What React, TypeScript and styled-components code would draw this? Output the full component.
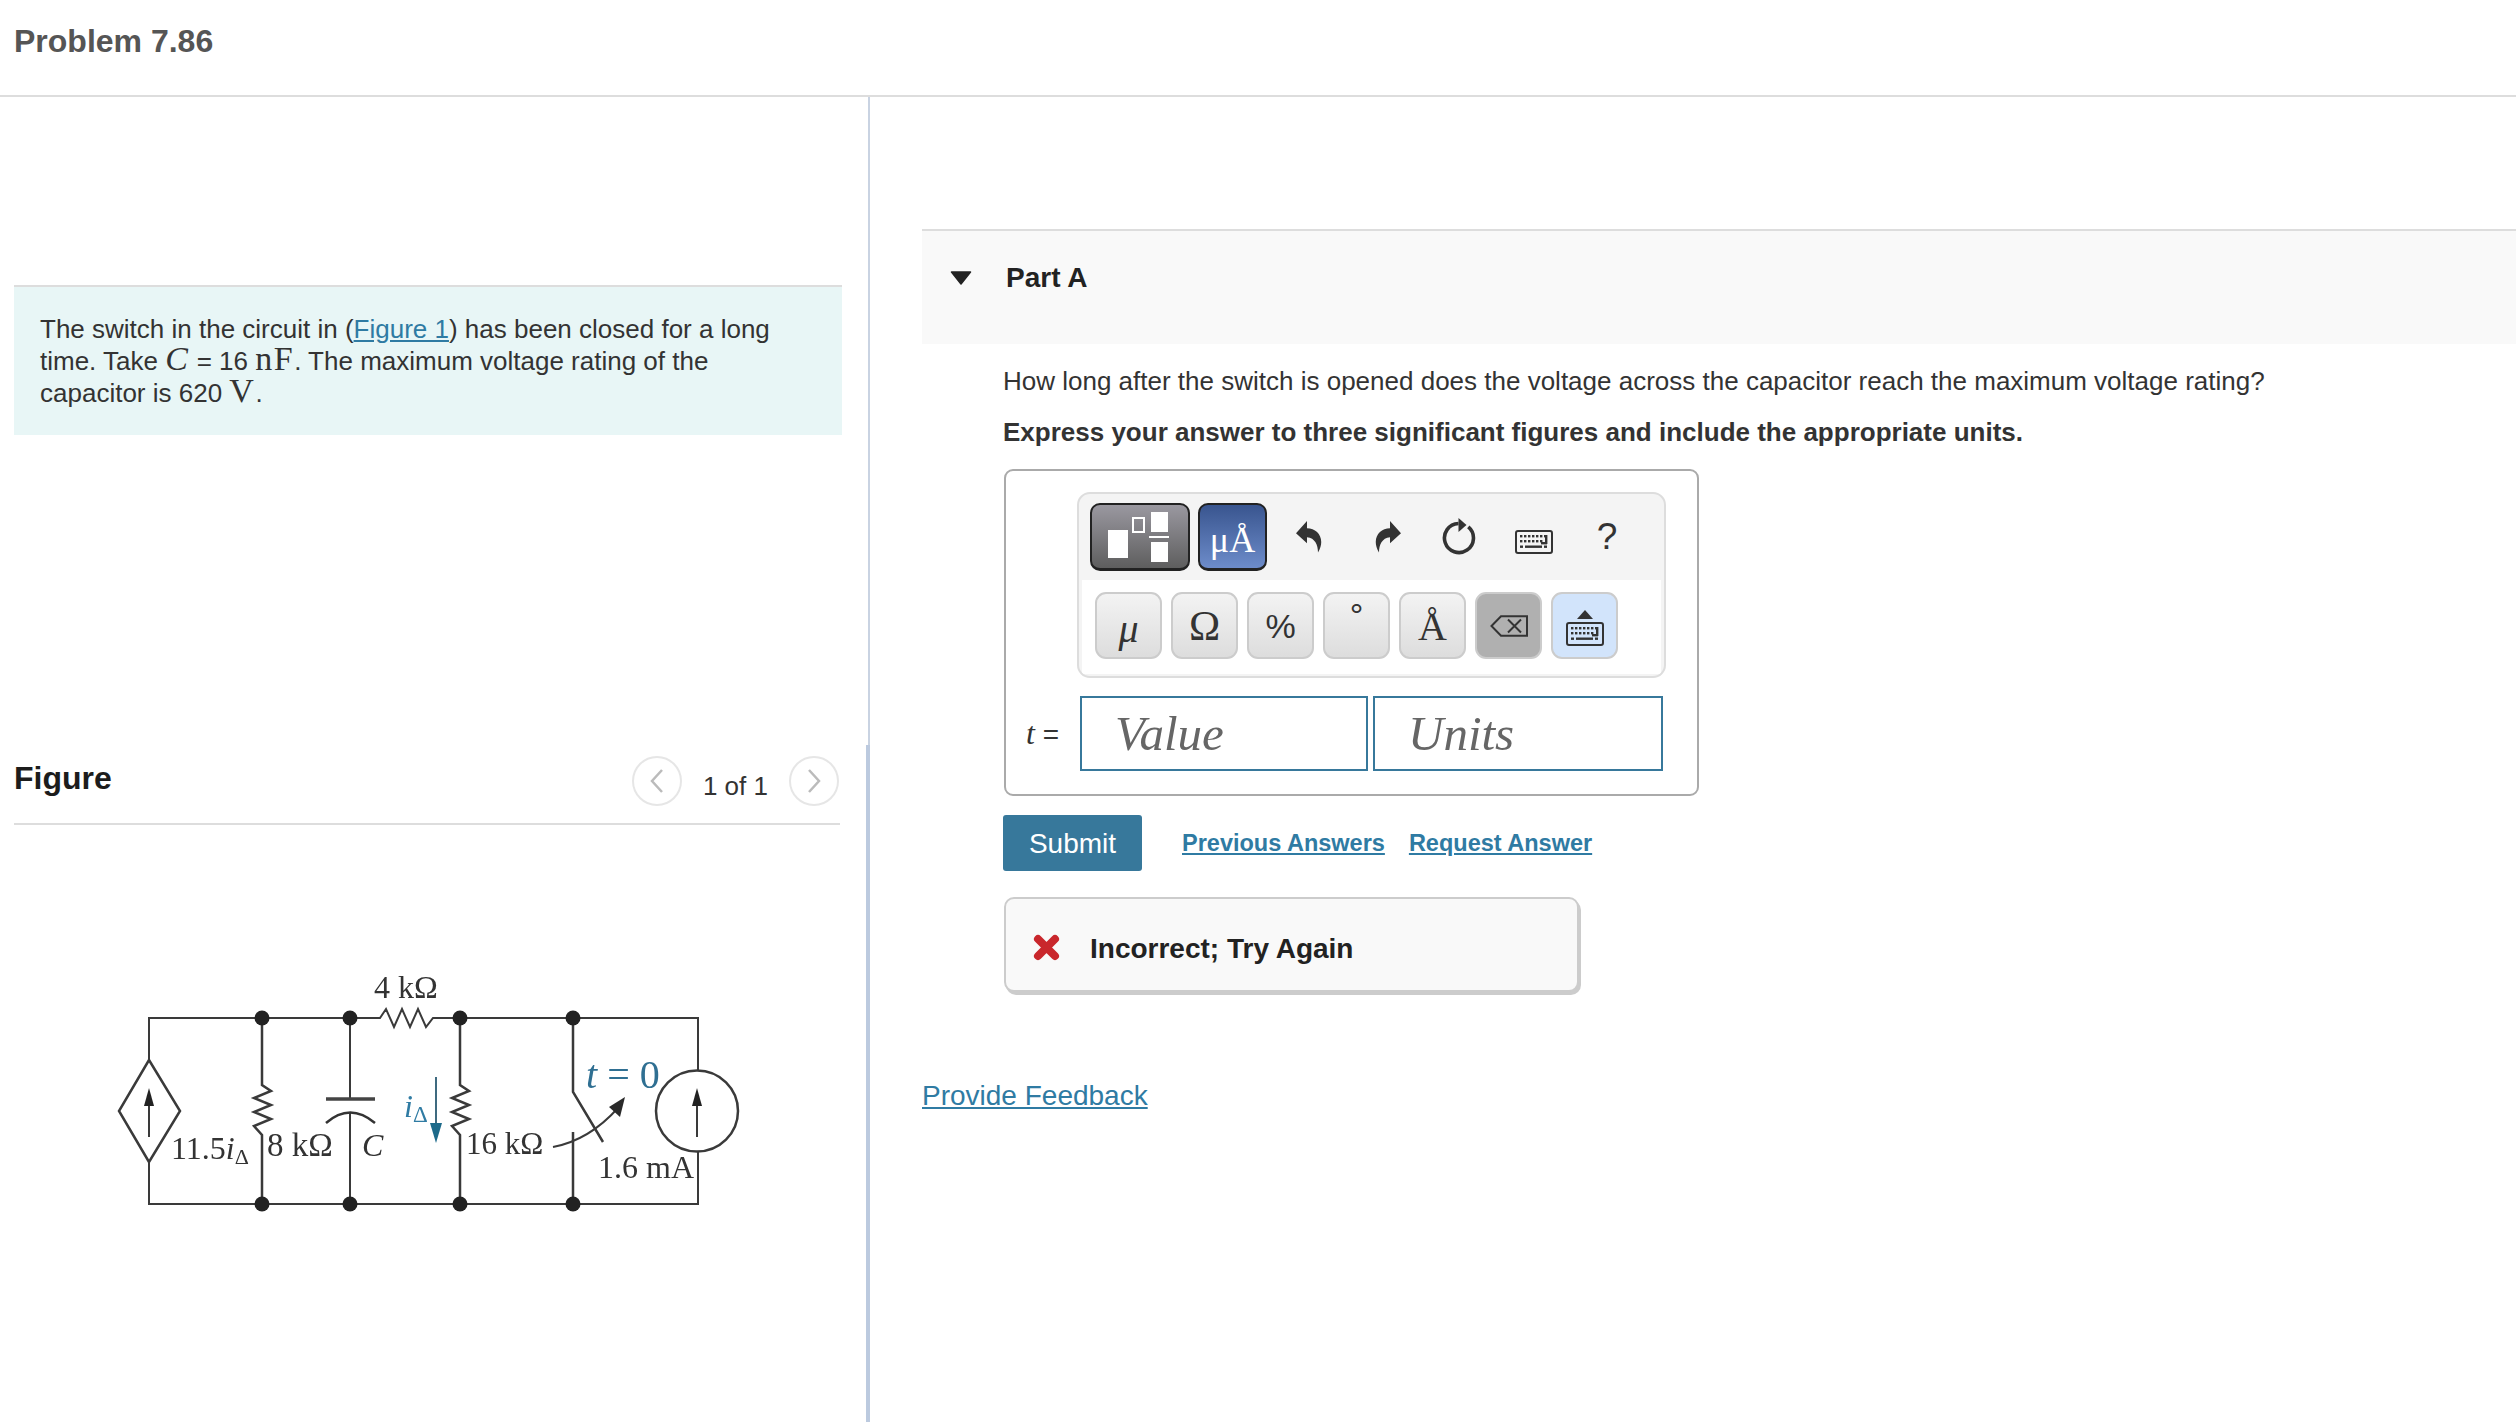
import React from "react";
import styled, { createGlobalStyle } from "styled-components";

const Global = createGlobalStyle`
  html, body { margin: 0; padding: 0; background: #fff; overflow: hidden; }
  body { font-family: "Liberation Sans", Arial, sans-serif; color: #333; }
`;
const Page = styled.div`
  width: 2516px; height: 1422px; display: flex; flex-direction: column; overflow: hidden;
`;
const Header = styled.header`
  height: 95px; flex: none; box-sizing: content-box; border-bottom: 2px solid #ddd;
  display: flex; align-items: center; padding-left: 14px;
`;
const Title = styled.h1`
  margin: 0 0 13px; font-size: 32px; font-weight: 700; color: #555;
`;
const Body = styled.div`
  flex: 1; display: flex; min-height: 0;
`;
const LeftCol = styled.section`
  width: 866px; flex: none; box-sizing: border-box; padding: 188px 24px 0 14px; display: flex; flex-direction: column;
`;
const Divider = styled.div`
  width: 4px; flex: none; display: flex; flex-direction: column; align-items: flex-end;
`;
const DividerThin = styled.div`
  width: 2px; height: 648px; background: #c9d3e2;
`;
const DividerThick = styled.div`
  width: 4px; flex: 1; background: #bccadf;
`;
const RightCol = styled.section`
  flex: 1; padding: 132px 0 0 52px; display: flex; flex-direction: column; min-width: 0;
`;
const Intro = styled.div`
  background: #e8f6f6; border-top: 2px solid #ddd; height: 150px; box-sizing: border-box;
  padding: 26px 50px 0 26px; font-size: 26px; line-height: 32px; color: #333;
`;
const MathText = styled.span<{ $italic?: boolean }>`
  font-family: "Liberation Serif", serif; font-size: 34px; line-height: 20px; letter-spacing: 1.5px;
  font-style: ${(p) => (p.$italic ? "italic" : "normal")};
`;
const TextLink = styled.a`
  color: #2f7ba3; text-decoration: underline;
`;
const FigureBar = styled.div`
  margin-top: 315px; width: 826px; height: 75px; box-sizing: border-box; border-bottom: 2px solid #ddd;
  display: flex; align-items: flex-start; justify-content: space-between;
`;
const FigureTitle = styled.h2`
  margin: 10px 0 0; font-size: 32px; font-weight: 700; color: #1c1c1c; line-height: 37px;
`;
const Pager = styled.div`
  display: flex; align-items: center; gap: 21px; margin: 6px 1px 0 0;
`;
const PagerButton = styled.div`
  width: 50px; height: 50px; box-sizing: border-box; border: 2px solid #e6e6e6; border-radius: 50%;
  display: flex; align-items: center; justify-content: center;
`;
const PagerText = styled.span`
  font-size: 26px; color: #333; position: relative; top: 5px;
`;
const Circuit = styled.svg`
  display: block; margin: 125px 0 0 66px; width: 700px; height: 290px; filter: blur(0.45px);
  font-family: "Liberation Serif", serif;
`;
const PartHeader = styled.div`
  height: 115px; box-sizing: border-box; background: #f9f9f9; border-top: 2px solid #ddd;
  display: flex; align-items: center; padding: 0 0 19px 28px; gap: 34px;
`;
const PartTitle = styled.h3`
  margin: 0; font-size: 28px; font-weight: 700; color: #222;
`;
const PartBody = styled.div`
  padding-left: 81px; display: flex; flex-direction: column; align-items: flex-start;
`;
const Question = styled.p<{ $bold?: boolean }>`
  margin: ${(p) => (p.$bold ? "19px" : "21px")} 0 0; font-size: 26px; line-height: 32px; color: #333;
  font-weight: ${(p) => (p.$bold ? 700 : 400)};
`;
const AnswerBox = styled.div`
  margin: 21px 0 0 1px; width: 695px; height: 327px; box-sizing: border-box; border: 2px solid #aaa; border-radius: 9px;
  padding: 21px 0 0; background: #fff;
`;
const Toolbar = styled.div`
  margin-left: 71px; width: 589px; height: 186px; box-sizing: border-box; border: 2px solid #ddd; border-radius: 13px;
  background: #f4f4f4; padding: 0 3px 2px; display: flex; flex-direction: column; overflow: hidden;
`;
const ToolRow = styled.div`
  height: 86px; box-sizing: border-box; flex: none; padding: 9px 0 0 8px; display: flex; align-items: flex-start;
`;
const TemplateButton = styled.div<{ $blue?: boolean }>`
  width: ${(p) => (p.$blue ? "69px" : "100px")}; height: 68px; box-sizing: border-box; margin-right: ${(p) => (p.$blue ? "5px" : "8px")};
  border: 2px solid #222; border-bottom-width: 3px; border-radius: 10px;
  background: ${(p) => (p.$blue ? "linear-gradient(#39558f,#6d8cca)" : "linear-gradient(#9a98a0,#5e5e5e)")};
  display: flex; align-items: center; justify-content: center; color: #fff;
  font-family: "Liberation Serif", serif; font-size: 36px; padding-top: ${(p) => (p.$blue ? "6px" : "0")};
`;
const IconSlot = styled.div<{ $w: number; $down?: number }>`
  width: ${(p) => p.$w}px; height: 68px; box-sizing: border-box; padding-top: ${(p) => p.$down ?? 0}px;
  display: flex; align-items: center; justify-content: center; color: #333;
`;
const Help = styled.span`
  font-size: 37px; color: #333;
`;
const KeyRow = styled.div`
  flex: 1; background: #fff; padding: 12px 0 0 13px; display: flex; gap: 9px; align-items: flex-start;
`;
const Key = styled.div<{ $tone?: "grey" | "blue" }>`
  width: 67px; height: 67px; box-sizing: border-box; border: 2px solid #ccc; border-radius: 11px;
  background: ${(p) => (p.$tone === "grey" ? "#b0b0b0" : p.$tone === "blue" ? "#d2e4fb" : "linear-gradient(#f3f3f3,#dddddd)")};
  display: flex; flex-direction: column; align-items: center; justify-content: center; color: #333;
`;
const KeySerif = styled.span<{ $italic?: boolean; $size: number; $down?: number }>`
  font-family: "Liberation Serif", serif; font-size: ${(p) => p.$size}px; line-height: 1;
  margin-top: ${(p) => p.$down ?? 0}px; font-style: ${(p) => (p.$italic ? "italic" : "normal")};
`;
const KeySans = styled.span<{ $up?: boolean }>`
  font-size: 34px; line-height: 1; margin-bottom: ${(p) => (p.$up ? "22px" : "0")};
`;
const KeyStack = styled.div`
  display: flex; flex-direction: column; align-items: center; gap: 3px; margin-top: 4px;
`;
const AnswerRow = styled.div`
  margin-top: 18px; padding-left: 20px; display: flex; align-items: center;
`;
const Var = styled.span`
  width: 54px; flex: none; font-size: 28px; color: #333; white-space: nowrap;
`;
const VarName = styled.i`
  font-family: "Liberation Serif", serif; font-size: 32px;
`;
const Field = styled.div<{ $w: number }>`
  width: ${(p) => p.$w}px; height: 75px; box-sizing: border-box; border: 2px solid #37789b; margin-right: 5px;
  font-family: "Liberation Serif", serif; font-style: italic; font-size: 49px; color: #666;
  display: flex; align-items: center; padding-left: 33px;
`;
const Actions = styled.div`
  margin: 19px 0 0 0; display: flex; align-items: center;
`;
const Submit = styled.div`
  width: 139px; height: 56px; box-sizing: border-box; padding-top: 2px; background: #37789b; color: #fff; border-radius: 3px; font-size: 28px;
  display: flex; align-items: center; justify-content: center; margin-right: 40px;
`;
const ActionLink = styled.a`
  font-size: 23.5px; font-weight: 700; color: #2f7ba3; text-decoration: underline; margin-right: 24px;
`;
const Feedback = styled.div`
  margin: 26px 0 0 1px; width: 575px; height: 95px; box-sizing: border-box; border: 2px solid #ccc; border-radius: 10px;
  background: #f9f9f9; box-shadow: 2px 3px 0 #ccc; display: flex; align-items: center; padding: 5px 0 0 27px; gap: 30px;
`;
const FeedbackText = styled.span`
  font-size: 28px; font-weight: 700; color: #222; position: relative; top: 2px;
`;
const ProvideLink = styled.a`
  margin-top: 88px; font-size: 28px; line-height: 32px; color: #2f7ba3; text-decoration: underline; align-self: flex-start;
`;

const Chevron = ({ dir }: { dir: "l" | "r" }) => (
  <svg width="16" height="26" viewBox="0 0 16 26">
    <path d={dir === "l" ? "M13 2 L3 13 L13 24" : "M3 2 L13 13 L3 24"} fill="none" stroke="#bbb" strokeWidth="2.5" />
  </svg>
);

const KeyboardIcon = () => (
  <svg width="38" height="24" viewBox="0 0 38 24">
    <rect x="1" y="1" width="36" height="22" rx="2" fill="none" stroke="#333" strokeWidth="2" />
    {[5, 9, 13, 17, 21, 25, 29].map((x) => (
      <rect key={x} x={x} y="5" width="2.4" height="2.4" fill="#333" />
    ))}
    {[5, 9, 13, 17, 21, 25].map((x) => (
      <rect key={x} x={x} y="10" width="2.4" height="2.4" fill="#333" />
    ))}
    <rect x="30" y="5" width="2.4" height="9" fill="#333" />
    <rect x="26" y="12" width="6" height="2.4" fill="#333" />
    <rect x="5" y="15.5" width="3" height="2.4" fill="#333" />
    <rect x="10" y="15.5" width="17" height="2.4" fill="#333" />
    <rect x="29" y="15.5" width="3" height="2.4" fill="#333" />
  </svg>
);

const ArrowIcon = ({ flip }: { flip?: boolean }) => (
  <svg width="28" height="32" viewBox="0 0 28 32">
    <path
      transform={flip ? "translate(28,0) scale(-1,1)" : undefined}
      d="M0 12.3 L11 0 L11 7.3 C22 7.5 30 18 22 31.5 C22 24 19 17 11 16.3 L11 22.3 Z"
      fill="#333"
    />
  </svg>
);

const ResetIcon = () => (
  <svg width="36" height="38" viewBox="0 0 36 38">
    <path d="M27.3 8.9 A14.5 14.5 0 1 1 17.5 5.5" fill="none" stroke="#333" strokeWidth="3.6" />
    <path d="M17.5 0 L25.5 7 L17.5 14 Z" fill="#333" />
  </svg>
);

const TemplateIcon = () => (
  <svg width="65" height="50" viewBox="0 0 65 50">
    <rect x="0" y="18" width="20" height="28" fill="#fff" />
    <rect x="25" y="6" width="11" height="14" fill="none" stroke="#fff" strokeWidth="2" />
    <rect x="43" y="0" width="17" height="20" fill="#fff" />
    <rect x="41" y="24" width="20" height="2" fill="#fff" />
    <rect x="43" y="30" width="17" height="20" fill="#fff" />
  </svg>
);

const BackspaceIcon = () => (
  <svg width="38" height="22" viewBox="0 0 38 22">
    <path d="M1.5 11 L11 1.2 H37 V20.8 H11 Z" fill="#b0b0b0" stroke="#333" strokeWidth="2" />
    <path d="M18 4.5 L31 17.5 M31 4.5 L18 17.5" stroke="#333" strokeWidth="2" fill="none" />
  </svg>
);

const CrossIcon = () => (
  <svg width="27" height="27" viewBox="0 0 27 27">
    <path d="M5 5 L22 22 M22 5 L5 22" stroke="#c9272c" strokeWidth="8" strokeLinecap="round" fill="none" />
  </svg>
);

const Caret = () => (
  <svg width="22" height="14" viewBox="0 0 22 14">
    <path d="M1.5 1 H20.5 L11 13 Z" fill="#222" stroke="#222" strokeWidth="1.5" strokeLinejoin="round" />
  </svg>
);

const CircuitDiagram = () => {
  const wire = { stroke: "#3a3a3a", strokeWidth: 2, fill: "none" };
  const dots: [number, number][] = [];
  [262, 350, 460, 573].forEach((x) => {
    dots.push([x, 1018], [x, 1204]);
  });
  const label = { fill: "#333", fontSize: 32 };
  return (
    <Circuit viewBox="80 950 700 290">
      <path {...wire} d="M149 1060 V1018 H380 L386 1009 L394 1027 L402 1009 L410 1027 L418 1009 L426 1027 L433 1018 H698 V1070" />
      <path {...wire} d="M149 1162 V1204 H698 V1152" />
      <path {...wire} strokeWidth={2.5} d="M149 1060 L180 1111 L149 1162 L119 1111 Z" />
      <path {...wire} d="M149 1137 V1100" />
      <path d="M149 1088 L154 1106 H144 Z" fill="#222" />
      <path {...wire} strokeWidth={2.5} d="M262 1018 V1085 L271 1091 L254 1098 L271 1105 L254 1112 L271 1119 L254 1126 L262 1135 V1204" />
      <path {...wire} d="M350 1018 V1098 M350 1113 V1204" />
      <path d="M326 1099 H375" stroke="#444" strokeWidth="3.5" fill="none" />
      <path d="M326 1123 Q350 1102 375 1123" stroke="#333" strokeWidth="2.5" fill="none" />
      <path {...wire} strokeWidth={2.5} d="M460 1018 V1085 L469 1091 L452 1098 L469 1105 L452 1112 L469 1119 L452 1126 L460 1135 V1204" />
      <path {...wire} strokeWidth={2.5} d="M573 1018 V1092 L603 1142 M573 1132 V1204" />
      <path {...wire} d="M553 1147 C580 1142 600 1128 618 1108" />
      <path d="M625 1097 L620 1117 L609 1107 Z" fill="#2a2a2a" />
      <ellipse cx="697" cy="1111" rx="41" ry="40.5" fill="#fff" stroke="#3a3a3a" strokeWidth="2.5" />
      <path {...wire} d="M697 1137 V1100" />
      <path d="M697 1088 L702 1106 H692 Z" fill="#222" />
      <path d="M436 1077 V1125" stroke="#2a5a72" strokeWidth="1.8" fill="none" />
      <path d="M430 1123 H442 L436 1143 Z" fill="#1d6a8a" />
      {dots.map(([x, y]) => (
        <circle key={`${x}-${y}`} cx={x} cy={y} r="7.5" fill="#222" />
      ))}
      <text x="374" y="998" {...label}>4 kΩ</text>
      <text x="171" y="1159" {...label}>11.5<tspan fontStyle="italic">i</tspan><tspan fontSize="22" dy="5">Δ</tspan></text>
      <text x="267" y="1156" {...label} fontSize={33}>8 kΩ</text>
      <text x="362" y="1156" {...label} fontStyle="italic">C</text>
      <text x="404" y="1117" fill="#2f7ba3" fontSize="32" fontStyle="italic">i<tspan fontSize="23" dy="5" fontStyle="normal">Δ</tspan></text>
      <text x="466" y="1154" {...label} fontSize={31}>16 kΩ</text>
      <text x="586" y="1088" fill="#2f6f92" fontSize="40"><tspan fontStyle="italic">t</tspan> = 0</text>
      <text x="598" y="1178" {...label}>1.6 mA</text>
    </Circuit>
  );
};

export default function App() {
  return (
    <Page>
      <Global />
      <Header>
        <Title>Problem 7.86</Title>
      </Header>
      <Body>
        <LeftCol>
          <Intro>
            The switch in the circuit in (<TextLink>Figure 1</TextLink>) has been closed for a long time. Take{" "}
            <MathText $italic>C</MathText> = 16 <MathText>nF</MathText>. The maximum voltage rating of the capacitor is 620{" "}
            <MathText>V</MathText>.
          </Intro>
          <FigureBar>
            <FigureTitle>Figure</FigureTitle>
            <Pager>
              <PagerButton><Chevron dir="l" /></PagerButton>
              <PagerText>1 of 1</PagerText>
              <PagerButton><Chevron dir="r" /></PagerButton>
            </Pager>
          </FigureBar>
          <CircuitDiagram />
        </LeftCol>
        <Divider>
          <DividerThin />
          <DividerThick />
        </Divider>
        <RightCol>
          <PartHeader>
            <Caret />
            <PartTitle>Part A</PartTitle>
          </PartHeader>
          <PartBody>
            <Question>How long after the switch is opened does the voltage across the capacitor reach the maximum voltage rating?</Question>
            <Question $bold>Express your answer to three significant figures and include the appropriate units.</Question>
            <AnswerBox>
              <Toolbar>
                <ToolRow>
                  <TemplateButton><TemplateIcon /></TemplateButton>
                  <TemplateButton $blue>μÅ</TemplateButton>
                  <IconSlot $w={76}><ArrowIcon /></IconSlot>
                  <IconSlot $w={78}><ArrowIcon flip /></IconSlot>
                  <IconSlot $w={66}><ResetIcon /></IconSlot>
                  <IconSlot $w={84} $down={9}><KeyboardIcon /></IconSlot>
                  <IconSlot $w={62}><Help>?</Help></IconSlot>
                </ToolRow>
                <KeyRow>
                  <Key><KeySerif $italic $size={40} $down={6}>μ</KeySerif></Key>
                  <Key><KeySerif $size={42}>Ω</KeySerif></Key>
                  <Key><KeySans>%</KeySans></Key>
                  <Key><KeySans $up>°</KeySans></Key>
                  <Key><KeySerif $size={40} $down={2}>Å</KeySerif></Key>
                  <Key $tone="grey"><BackspaceIcon /></Key>
                  <Key $tone="blue">
                    <KeyStack>
                      <svg width="16" height="9" viewBox="0 0 16 9"><path d="M8 0 L16 9 H0 Z" fill="#333" /></svg>
                      <KeyboardIcon />
                    </KeyStack>
                  </Key>
                </KeyRow>
              </Toolbar>
              <AnswerRow>
                <Var><VarName>t</VarName> =</Var>
                <Field $w={288}>Value</Field>
                <Field $w={290}>Units</Field>
              </AnswerRow>
            </AnswerBox>
            <Actions>
              <Submit>Submit</Submit>
              <ActionLink>Previous Answers</ActionLink>
              <ActionLink>Request Answer</ActionLink>
            </Actions>
            <Feedback>
              <CrossIcon />
              <FeedbackText>Incorrect; Try Again</FeedbackText>
            </Feedback>
          </PartBody>
          <ProvideLink>Provide Feedback</ProvideLink>
        </RightCol>
      </Body>
    </Page>
  );
}
